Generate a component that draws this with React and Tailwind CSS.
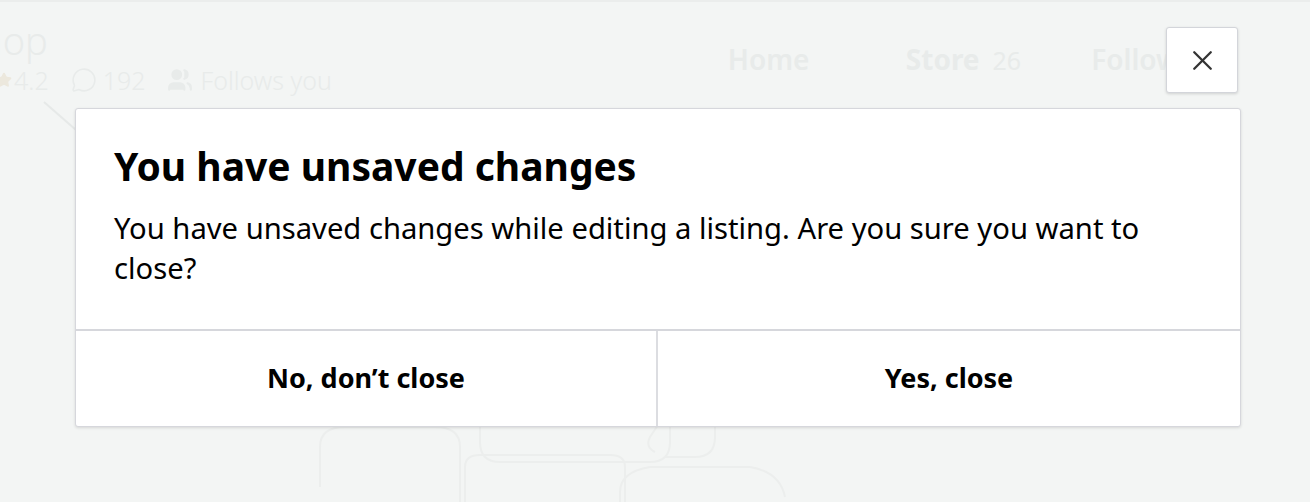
import { X, MessageCircle, Users, Star } from 'lucide-react';

const font = { fontFamily: '"Noto Sans", "Open Sans", sans-serif' };

function BackgroundPage() {
  return (
    <div className="h-full w-full border-t-2 border-[#ebedec] text-[#e8ebea]">
      <div className="flex items-start">
        <div className="pt-[16px]">
          <div className="-ml-[20px] text-[38px] font-light leading-[44px]">hop</div>
          <div className="-ml-[4px] mt-[2px] flex items-center text-[25px] font-light leading-[32px]">
            <Star size={16} fill="#ece8dd" stroke="#ece8dd" />
            <span className="ml-[2px]">4.2</span>
            <MessageCircle size={26} strokeWidth={1.5} className="ml-[22px]" />
            <span className="ml-[6px]">192</span>
            <Users size={26} fill="#e8ebea" className="ml-[22px]" />
            <span className="ml-[7px]">Follows you</span>
          </div>
        </div>
        <div className="ml-[396px] flex items-baseline pt-[38px] text-[28px] font-semibold leading-[38px]">
          <span className="w-[81px]">Home</span>
          <span className="ml-[97px] font-bold">Store</span>
          <span className="ml-[13px] text-[25px] font-normal">26</span>
          <span className="ml-[70px]">Follows 5</span>
        </div>
      </div>
      {/* faint product sketches below the dialog */}
      <svg className="absolute left-0 bottom-0" width="1310" height="110" viewBox="0 0 1310 110" fill="none" stroke="#eceeed" strokeWidth="2">
        <path d="M340 0 q0 25 25 28 h60 q30 0 40 -28" />
        <path d="M320 95 v-40 q0 -20 25 -20 h90 q25 0 25 20 v60" />
        <path d="M480 10 v40 q0 20 20 20 h150 q20 0 20 -20 v-40" />
        <path d="M465 110 v-35 q0 -12 15 -12 h130 q15 0 15 12 v35" />
        <path d="M660 10 v20 l-10 15 q-5 10 5 15" />
        <path d="M715 5 v40 q0 20 -20 20 h-30" />
        <path d="M620 110 v-10 q0 -20 30 -25 h100 q30 5 35 30" />
      </svg>
      <svg className="absolute left-[40px] top-[100px]" width="40" height="40" viewBox="0 0 40 40" fill="none" stroke="#e6e9e8" strokeWidth="2">
        <path d="M4 2 L36 30" />
      </svg>
    </div>
  );
}

export default function App() {
  return (
    <div className="relative h-[502px] w-full overflow-hidden bg-[#f3f5f4]" style={font}>
      <BackgroundPage />

      <button className="absolute left-[1166px] top-[27px] flex h-[66px] w-[72px] items-center justify-center rounded-[3px] border border-[#d3d5da] bg-white shadow-[0_1px_3px_rgba(0,0,0,0.15)]">
        <X size={33} strokeWidth={1.7} color="#333" />
      </button>

      <div className="absolute left-[75px] top-[108px] w-[1166px] rounded-[3px] border border-[#d6d7dc] bg-white text-black shadow-[0_1px_3px_rgba(0,0,0,0.12)]">
        <div className="px-[38px] pt-[31px] pb-[41px]">
          <h2 className="text-[39px] font-bold leading-[52px]">You have unsaved changes</h2>
          <p className="mt-[16px] text-[29.2px] leading-[40px]">
            You have unsaved changes while editing a listing. Are you sure you want to close?
          </p>
        </div>
        <div className="grid grid-cols-2 border-t-2 border-[#d6d7dc]">
          <button className="h-[95px] border-r-2 border-[#dcdde1] text-[27px] font-bold">No, don’t close</button>
          <button className="h-[95px] text-[27px] font-bold">Yes, close</button>
        </div>
      </div>
    </div>
  );
}
